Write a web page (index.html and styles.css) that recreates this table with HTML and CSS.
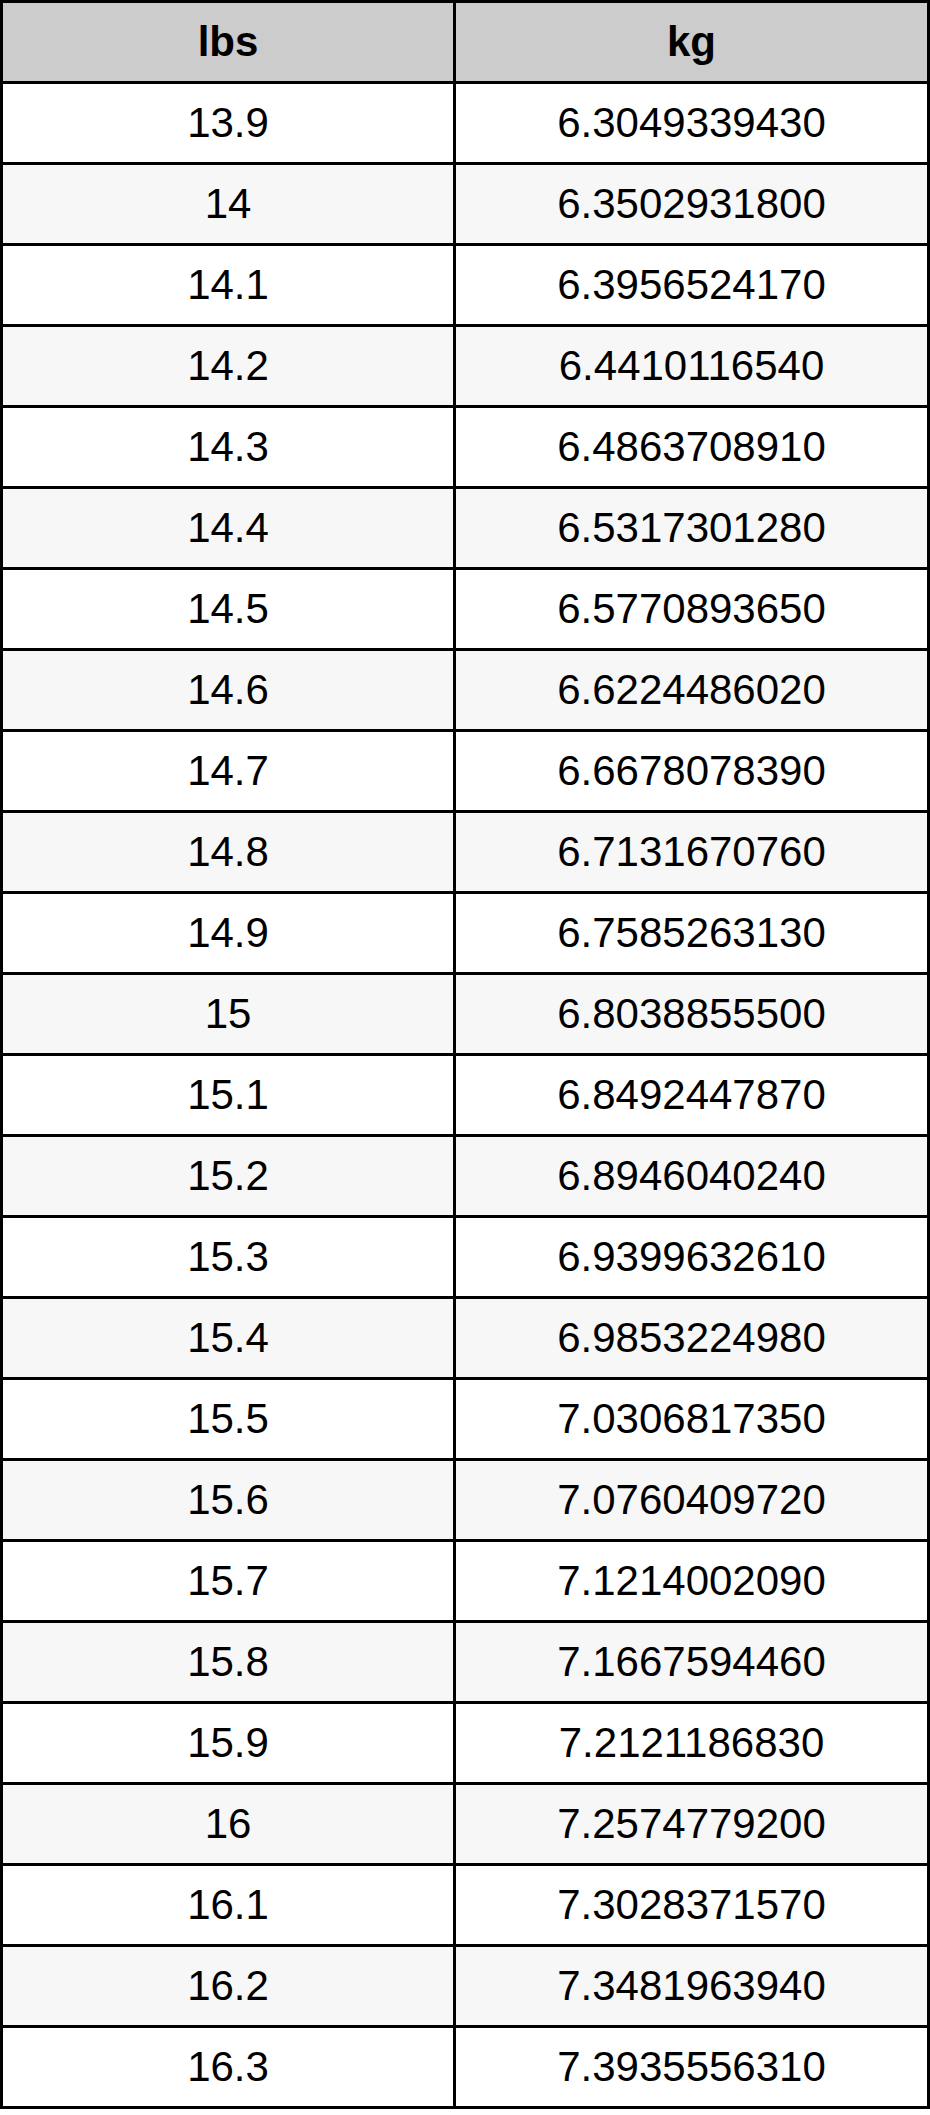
FILE: index.html
```html
<!DOCTYPE html>
<html>
<head>
<meta charset="utf-8">
<link rel="stylesheet" href="styles.css">
</head>
<body>
<table class="conv">
<colgroup><col class="c-lbs"><col class="c-kg"></colgroup>
<thead>
<tr><th>lbs</th><th>kg</th></tr>
</thead>
<tbody>
<tr><td>13.9</td><td>6.3049339430</td></tr>
<tr><td>14</td><td>6.3502931800</td></tr>
<tr><td>14.1</td><td>6.3956524170</td></tr>
<tr><td>14.2</td><td>6.4410116540</td></tr>
<tr><td>14.3</td><td>6.4863708910</td></tr>
<tr><td>14.4</td><td>6.5317301280</td></tr>
<tr><td>14.5</td><td>6.5770893650</td></tr>
<tr><td>14.6</td><td>6.6224486020</td></tr>
<tr><td>14.7</td><td>6.6678078390</td></tr>
<tr><td>14.8</td><td>6.7131670760</td></tr>
<tr><td>14.9</td><td>6.7585263130</td></tr>
<tr><td>15</td><td>6.8038855500</td></tr>
<tr><td>15.1</td><td>6.8492447870</td></tr>
<tr><td>15.2</td><td>6.8946040240</td></tr>
<tr><td>15.3</td><td>6.9399632610</td></tr>
<tr><td>15.4</td><td>6.9853224980</td></tr>
<tr><td>15.5</td><td>7.0306817350</td></tr>
<tr><td>15.6</td><td>7.0760409720</td></tr>
<tr><td>15.7</td><td>7.1214002090</td></tr>
<tr><td>15.8</td><td>7.1667594460</td></tr>
<tr><td>15.9</td><td>7.2121186830</td></tr>
<tr><td>16</td><td>7.2574779200</td></tr>
<tr><td>16.1</td><td>7.3028371570</td></tr>
<tr><td>16.2</td><td>7.3481963940</td></tr>
<tr><td>16.3</td><td>7.3935556310</td></tr>
</tbody>
</table>
</body>
</html>
```
FILE: styles.css
```css
html, body {
  margin: 0;
  padding: 0;
  background: #fff;
}
body {
  font-family: "Liberation Sans", Arial, sans-serif;
  color: #000;
}
.conv {
  width: 930px;
  table-layout: fixed;
  border-collapse: separate;
  border-spacing: 3px;
  background: #000;
}
.c-lbs { width: 450px; }
.c-kg { width: 471px; }
.conv th,
.conv td {
  height: 78px;
  padding: 0;
  text-align: center;
  vertical-align: middle;
  font-size: 42px;
  line-height: 1;
}
.conv th {
  background: #cccccc;
  font-weight: bold;
}
.conv tbody tr:nth-child(odd) td { background: #ffffff; }
.conv tbody tr:nth-child(even) td { background: #f7f7f7; }
```
